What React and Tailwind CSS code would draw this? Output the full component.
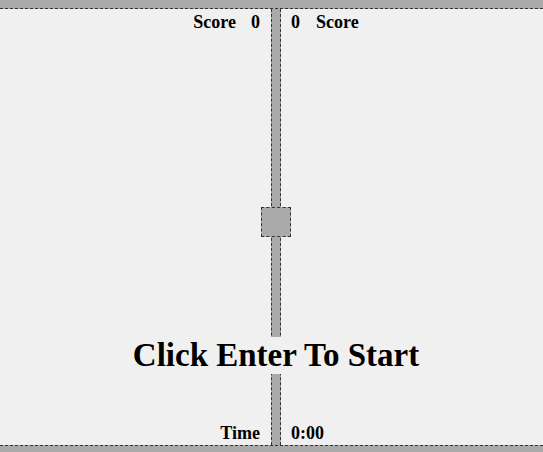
import React from "react";

const serif = { fontFamily: '"Liberation Serif", "Times New Roman", serif' };

export default function App() {
  return (
    <div
      className="relative w-[543px] h-[452px] bg-[#f0f0f0] flex flex-col overflow-hidden text-black"
      style={serif}
    >
      <div className="h-[9px] bg-[#aaaaaa] border-b border-dashed border-[#333]" />

      <div className="flex-1 flex">
        <div className="w-[271px] flex flex-col justify-between items-end pr-[11px] font-bold text-[18px] leading-[20px]">
          <div className="flex gap-[15px] pt-[3px]">
            <span>Score</span>
            <span>0</span>
          </div>
          <div className="flex pb-[2px]">
            <span>Time</span>
          </div>
        </div>

        <div className="w-[10px] bg-[#aaaaaa] border-x border-dashed border-[#333]" />

        <div className="flex-1 flex flex-col justify-between items-start pl-[10px] font-bold text-[18px] leading-[20px]">
          <div className="flex gap-[16px] pt-[3px]">
            <span>0</span>
            <span>Score</span>
          </div>
          <div className="flex pb-[2px]">
            <span>0:00</span>
          </div>
        </div>
      </div>

      <div className="h-[7px] bg-[#aaaaaa] border-t border-dashed border-[#333]" />

      <div className="absolute left-[261px] top-[207px] w-[30px] h-[30px] bg-[#aaaaaa] border border-dashed border-[#333]" />

      <div className="absolute left-[276px] top-[337px] -translate-x-1/2 bg-[#f0f0f0] font-bold text-[33px] leading-[37px] whitespace-nowrap">
        Click Enter To Start
      </div>
    </div>
  );
}
